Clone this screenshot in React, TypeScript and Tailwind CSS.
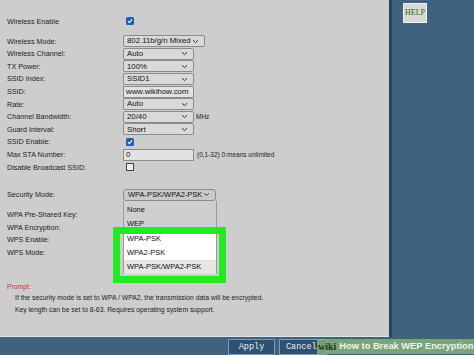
import React from 'react';

const sans = "font-['Liberation_Sans',Arial,sans-serif]";

function Chevron() {
  return (
    <svg width="7" height="5" viewBox="0 0 7 5" className="shrink-0">
      <path d="M1 1.2 L3.5 3.6 L6 1.2" fill="none" stroke="#333" strokeWidth="1" />
    </svg>
  );
}

function Select({ value, width }: { value: string; width: string }) {
  return (
    <div className={`${width} h-[12px] flex items-center justify-between pl-[3px] pr-[5px] bg-[#d9d9d9] border border-[#8c8c8c] rounded-[2px] text-[7.8px] text-[#111]`}>
      <span className="leading-none">{value}</span>
      <Chevron />
    </div>
  );
}

function Input({ value }: { value: string }) {
  return (
    <div className="w-[71px] h-[12px] flex items-center pl-[2px] bg-[#e2e2e2] border border-[#8c8c8c] text-[7.8px] text-[#111]">
      <span className="leading-none">{value}</span>
    </div>
  );
}

function Check({ on }: { on: boolean }) {
  return on ? (
    <div className="w-[8px] h-[8px] ml-[3px] rounded-[1.5px] bg-[#1f5fb8] flex items-center justify-center">
      <svg width="6" height="6" viewBox="0 0 6 6">
        <path d="M1 3.2 L2.4 4.6 L5 1.4" fill="none" stroke="#fff" strokeWidth="1.1" />
      </svg>
    </div>
  ) : (
    <div className="w-[8px] h-[8px] ml-[3px] bg-[#eee] border border-[#444]" />
  );
}

function Row({ label, children }: { label: string; children?: React.ReactNode }) {
  return (
    <div className="h-[12.6px] flex items-center">
      <div className="w-[116px] text-[7.2px] text-[#222] leading-none">{label}</div>
      <div className="flex items-center">{children}</div>
    </div>
  );
}

const options = ['None', 'WEP', 'WPA-PSK', 'WPA2-PSK', 'WPA-PSK/WPA2-PSK'];

export default function App() {
  return (
    <div className={`w-[474px] h-[355px] bg-[#41627e] flex flex-col overflow-hidden ${sans}`}>
      <div className="flex h-[338px]">
        {/* Settings panel */}
        <div className="relative w-[389px] bg-[#cdcdcd] border-b border-[#e4e4e4] pl-[7px] pt-[15px]">
          <Row label="Wireless Enable">
            <Check on />
          </Row>
          <div className="h-[7.4px]" />
          <Row label="Wireless Mode:"><Select value="802.11b/g/n Mixed" width="w-[82px]" /></Row>
          <Row label="Wireless Channel:"><Select value="Auto" width="w-[71px]" /></Row>
          <Row label="TX Power:"><Select value="100%" width="w-[71px]" /></Row>
          <Row label="SSID Index:"><Select value="SSID1" width="w-[71px]" /></Row>
          <Row label="SSID:"><Input value="www.wikihow.com" /></Row>
          <Row label="Rate:"><Select value="Auto" width="w-[71px]" /></Row>
          <Row label="Channel Bandwidth:">
            <Select value="20/40" width="w-[71px]" />
            <span className="ml-[2px] text-[6.5px] text-[#222]">MHz</span>
          </Row>
          <Row label="Guard Interval:"><Select value="Short" width="w-[71px]" /></Row>
          <Row label="SSID Enable:"><Check on /></Row>
          <Row label="Max STA Number:">
            <Input value="0" />
            <span className="ml-[3px] text-[6.5px] text-[#222]">(0,1-32) 0:means unlimited</span>
          </Row>
          <Row label="Disable Broadcast SSID:"><Check on={false} /></Row>
          <div className="h-[15px]" />
          <div className="relative">
            <Row label="Security Mode:">
              <div className="w-[93px] h-[12px] flex items-center justify-between pl-[4px] pr-[5px] bg-[#c9c9c9] border border-[#8c8c8c] rounded-[3px] text-[7.5px] text-[#111]">
                <span className="leading-none">WPA-PSK/WPA2-PSK</span>
                <Chevron />
              </div>
            </Row>
            {/* open dropdown list */}
            <div className="absolute left-[116px] top-[12.6px] w-[94px] bg-[#cfcfcf] border-l border-r border-[#9a9a9a] pt-[1px] z-10">
              {options.map((o, i) => (
                <div
                  key={o}
                  className={`flex items-center pl-[3px] text-[7.5px] text-[#111] ${i === 1 ? 'h-[15px]' : 'h-[14.2px]'} ${i === 4 ? 'bg-[#e6e6e6]' : i >= 2 ? 'bg-white' : ''}`}
                >
                  {o}
                </div>
              ))}
            </div>
            {/* highlight frame */}
            <div className="absolute left-[106px] top-[38px] w-[113px] h-[56px] border-[7px] border-[#22ea22] z-20" />
          </div>
          <div className="h-[7.4px]" />
          <Row label="WPA Pre-Shared Key:" />
          <Row label="WPA Encryption:" />
          <Row label="WPS Enable:" />
          <Row label="WPS Mode:" />
          <div className="h-[25px]" />
          <div className="text-[6.8px] text-[#c0363a] leading-none">Prompt:</div>
          <div className="pl-[8px] pt-[1px] text-[6.8px] text-[#222] leading-[12px]">
            <div>If the security mode is set to WPA / WPA2, the transmission data will be encrypted.</div>
            <div>Key length can be set to 8-63. Requires operating system support.</div>
          </div>
        </div>
        {/* Side help column */}
        <div className="flex-1 border-l-[3px] border-[#2c4357] pl-[11px] pt-[3px]">
          <div className="w-[24px] h-[20px] bg-[#d6dad2] border border-[#eef0f6] flex items-center justify-center text-[8px] text-[#2f5a23] font-['Liberation_Serif',serif]">
            HELP
          </div>
        </div>
      </div>
      {/* Bottom button bar */}
      <div className="relative flex-1 flex items-start pt-[2px] pl-[228px] gap-[4px]">
        <div className="w-[47px] h-[16px] bg-[#2d5171] border border-[#7f9ab3] flex items-center justify-center text-[8.5px] text-[#e8eef4] font-['Liberation_Mono',monospace]">
          Apply
        </div>
        <div className="w-[48px] h-[16px] bg-[#2d5171] border border-[#7f9ab3] flex items-center pl-[6px] text-[8.5px] text-[#e8eef4] font-['Liberation_Mono',monospace]">
          Cancel
        </div>
        {/* watermark */}
        <div className="absolute left-[317px] top-[2px] right-0 h-[15px] bg-[#86b57a]/80 flex items-center pl-[1px] font-bold">
          <span className="text-[10px] text-[#23361f] font-['Liberation_Serif',serif]">wiki</span>
          <span className="ml-[3px] text-[9.3px] text-[#eef5ea]">How to Break WEP Encryption</span>
        </div>
      </div>
    </div>
  );
}
